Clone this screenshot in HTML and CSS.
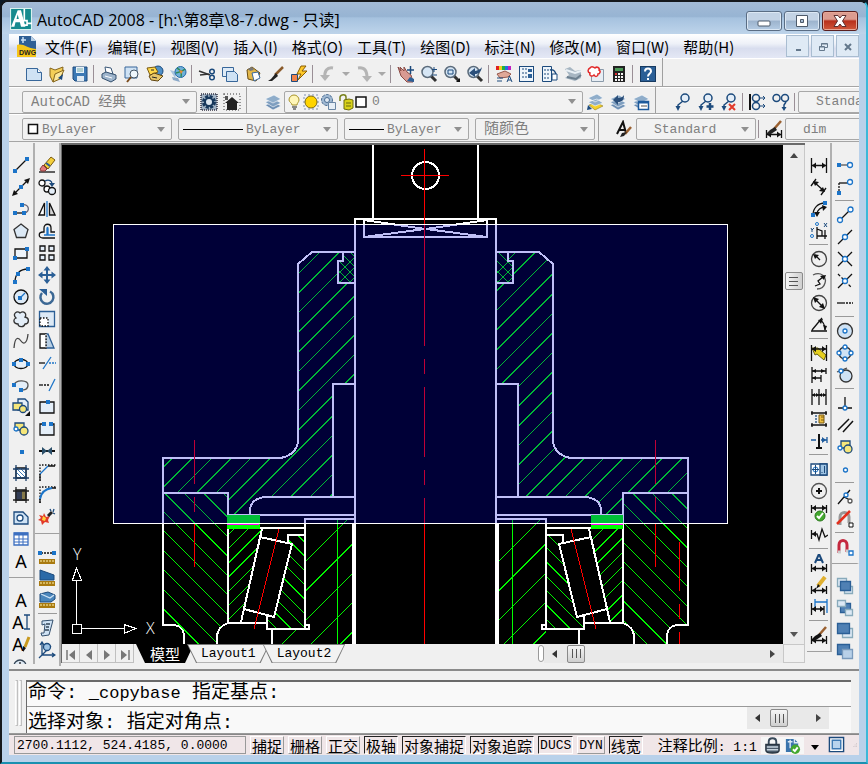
FILE: index.html
```html
<!DOCTYPE html>
<html lang="zh-CN">
<head>
    <meta charset="UTF-8">
    <meta name="viewport" content="width=device-width, initial-scale=1.0">
    <title>AutoCAD 2008</title>
    <link rel="stylesheet" href="styles.css">
</head>
<body>
<!-- shared icon parts -->
<svg class="defs" aria-hidden="true">
    <symbol id="dim" viewBox="0 0 18 18"><path d="M1.500 2V17M16.500 2V17M2 9.500H16" stroke="#111" stroke-width="1.300"/><path d="M2 9.500l4-3v6zM16 9.500l-4-3v6z" fill="#111" stroke="none"/></symbol>
    <symbol id="dimlow" viewBox="0 0 18 18"><path d="M1.500 10V18M16.500 10V18M2 14.500H16" stroke="#111" stroke-width="1.300"/><path d="M2 14.500l4-3v6zM16 14.500l-4-3v6z" fill="#111" stroke="none"/></symbol>
    <symbol id="ruler" viewBox="0 0 18 18"><path d="M1 12h16v5h-16z" fill="#a97a10" stroke="none"/><path d="M3 13v2M6 13v2M9 13v2M12 13v2M15 13v2" stroke="#fff3b0" stroke-width="1"/></symbol>
    <symbol id="layers" viewBox="0 0 18 18"><path d="M1 12l9-3 7 4-8 4z" fill="#6d8fb4" stroke="#fff" stroke-width=".6"/><path d="M1 9l9-3 7 4-8 4z" fill="#7f9fc0" stroke="#fff" stroke-width=".6"/><path d="M1 6l9-4 7 4-8 4z" fill="#8fadca" stroke="#fff" stroke-width=".6"/></symbol>
    <symbol id="lens" viewBox="0 0 18 18"><path d="M11 11l5 5" stroke="#333" stroke-width="3"/><circle cx="7.500" cy="7" r="5.500" fill="#d6e6f5" stroke="#5b6b7b" stroke-width="1.500"/></symbol>
    <symbol id="leader" viewBox="0 0 18 18"><circle cx="11" cy="5" r="4" fill="#e4eef8" stroke="#1c4a7c" stroke-width="1.500"/><path d="M9 8L4 12v4" stroke="#1c4a7c" stroke-width="1.500"/><path d="M4 18l-2.500-5h5z" fill="#1c4a7c"/></symbol>
    <symbol id="printer" viewBox="0 0 18 18"><path d="M5 2l6 1 2 6-7-1z" fill="#fff" stroke="#3b5878"/><path d="M2 9l4-2 10 3v4l-5 3-9-4z" fill="#9db4cc" stroke="#34506e"/><path d="M5 11l7 2" stroke="#fff"/></symbol>
    <symbol id="dots" viewBox="0 0 18 18"><rect x="1.500" y="1.500" width="14" height="15" fill="#eef5fb" stroke="#1c4a7c"/><path d="M5 3v12M8 3v12" stroke="#1c4a7c" stroke-dasharray="2 2"/></symbol>
</svg>

<div class="window">
    <header class="titlebar">
        <svg class="appicon" viewBox="0 0 20 20"><path d="M0 0h20v20h-20z" fill="#168a8e"/><path d="M0 0h20v20h-20z" stroke="#d9f2ef" stroke-width="2"/><path d="M1 17L7 2h3l4 15h-4l-1-4H5l-1 4z" fill="#fff"/><path d="M7 6l-1 4h2z" fill="#168a8e"/><path d="M13 1v11M15 14h5M11.500 11.500h4v4h-4z" stroke="#fff" stroke-width="1.500"/></svg>
        <h1 class="title">AutoCAD 2008 - [h:\第8章\8-7.dwg - 只读]</h1>
        <button class="winbtn" aria-label="最小化"><svg viewBox="0 0 16 14"><rect x="2" y="7" width="12" height="5" rx="1" fill="#fff" stroke="#4d5a6a"/></svg></button>
        <button class="winbtn" aria-label="还原"><svg viewBox="0 0 16 14"><path fill-rule="evenodd" d="M2.500 1.500h11v11h-11zM6.500 5.500h3v3h-3z" fill="#fff" stroke="#4d5a6a"/></svg></button>
        <button class="winbtn close" aria-label="关闭"><svg viewBox="0 0 16 14"><path d="M2 1.500h4l2 2.500 2-2.500h4L10.500 7l3.500 5.500h-4L8 10l-2 2.500H2L5.500 7z" fill="#fff" stroke="#5d3030"/></svg></button>
    </header>

    <nav class="menubar">
        <svg class="docicon" viewBox="0 0 20 22"><path d="M2 1h12l5 5v12H2z" fill="#2f5f96"/><path d="M14 1v5h5" fill="#b8cfe6"/><path d="M4 5h5M6 2v6" stroke="#c9e0f5"/><path d="M0 10c7-2 9 3 19 4v8H0z" fill="#f5c518"/><text x="2" y="20" class="dwg">DWG</text></svg>
        <a href="#">文件(F)</a><a href="#">编辑(E)</a><a href="#">视图(V)</a><a href="#">插入(I)</a><a href="#">格式(O)</a><a href="#">工具(T)</a><a href="#">绘图(D)</a><a href="#">标注(N)</a><a href="#">修改(M)</a><a href="#">窗口(W)</a><a href="#">帮助(H)</a>
        <span class="docbtns">
            <button aria-label="最小化文档"><svg viewBox="0 0 12 12"><path d="M4 9h5" stroke="#64788c" stroke-width="2"/></svg></button>
            <button aria-label="还原文档"><svg viewBox="0 0 12 12"><path d="M4.500 5V2.500h6v4H8M2.500 5.500h5v4h-5zM4 3h6M2 6h5" stroke="#64788c"/></svg></button>
            <button aria-label="关闭文档"><svg viewBox="0 0 12 12"><path d="M3 3l6 6M9 3l-6 6" stroke="#64788c" stroke-width="2"/></svg></button>
        </span>
    </nav>

    <div class="toolrow">
        <div class="bar standard">
            <button aria-label="新建"><svg viewBox="0 0 18 18"><path d="M1.500 3.500h11l4 4v8h-15z" fill="#cfe2f4" stroke="#38679a"/><path d="M12.500 3.500v4h4" fill="#fff" stroke="#38679a"/></svg></button>
            <button aria-label="打开"><svg viewBox="0 0 18 18"><path d="M2 3l5 2 8-3-1 9-9 6-3-6z" fill="#f4cf58" stroke="#86651b"/><path d="M5 17l2-8 9-4-4 9z" fill="#fbe79a" stroke="#86651b"/><path d="M10 13l5-4-1 6z" fill="#1c4a7c"/></svg></button>
            <button aria-label="保存"><svg viewBox="0 0 18 18"><path d="M2 2h14v14H4l-2-2z" fill="#3c79b4" stroke="#1c4a7c"/><path d="M5 2h8v6H5z" fill="#e8f2fa"/><path d="M6 11h7v5H6z" fill="#dfe9f2"/><path d="M6 4h6M6 6h6" stroke="#7aa"/></svg></button>
            <i class="sep"></i>
            <button aria-label="打印"><svg viewBox="0 0 18 18"><use href="#printer"/></svg></button>
            <button aria-label="打印预览"><svg viewBox="0 0 18 18"><path d="M2 2h12v11H2z" fill="#cfe2f4" stroke="#38679a"/><circle cx="11" cy="9" r="4" fill="#eef6fc" stroke="#456"/><path d="M8 12l-4 5" stroke="#7a4a1a" stroke-width="2"/></svg></button>
            <button aria-label="发布"><svg viewBox="0 0 18 18"><circle cx="12" cy="6" r="5" fill="#4f8fc6" stroke="#1c4a7c"/><path d="M1 3l8-1 3 5-8 3z" fill="#ffd84a" stroke="#7a5a10"/><path d="M3 11l5-3 9 3-5 5-7-1z" fill="#e6c56a" stroke="#5e4410"/><path d="M5 5h3M6 12l5 1" stroke="#222"/></svg></button>
            <button aria-label="三维DWF"><svg viewBox="0 0 18 18"><path d="M1 5l7 2-2 6z" fill="#a8c4de"/><circle cx="11.500" cy="7" r="5.500" fill="#6fb0d8" stroke="#2468a8"/><path d="M8 3c4 2 5 6 4 9M7 8c4-1 7-2 9-4" stroke="#2f8a5a" stroke-width="1.500"/><path d="M10 5l4 1-2 3z" fill="#e88c3a"/><path d="M3 12l6 1 2 4-7-2z" fill="#8aa8c8"/></svg></button>
            <i class="sep"></i>
            <button aria-label="剪切"><svg viewBox="0 0 18 18"><path d="M1 6l11 4M2 10l9-1" stroke="#333" stroke-width="1.500"/><circle cx="14" cy="6.500" r="2.300" stroke="#1c4a7c" stroke-width="1.500"/><circle cx="14" cy="12.500" r="2.300" stroke="#1c4a7c" stroke-width="1.500"/></svg></button>
            <button aria-label="复制"><svg viewBox="0 0 18 18"><path d="M1.500 2.500h11v9h-11z" fill="#dfebf6" stroke="#38679a"/><path d="M5.500 6.500h8l3 3v7h-11z" fill="#cfe2f4" stroke="#38679a"/></svg></button>
            <button aria-label="粘贴"><svg viewBox="0 0 18 18"><path d="M3 5l5-3 8 6-4 8-8-2z" fill="#e4b84a" stroke="#6b4d12"/><path d="M8 8l6-1 2 6-6 3z" fill="#fff" stroke="#38679a"/><path d="M4 4l4-2 2 3-4 1z" fill="#777"/></svg></button>
            <button aria-label="特性匹配"><svg viewBox="0 0 18 18"><path d="M16 2L8 10" stroke="#8a5a2a" stroke-width="2.500"/><path d="M9 8l2 3-6 5H1l3-2z" fill="#222"/></svg></button>
            <button aria-label="块编辑器"><svg viewBox="0 0 18 18"><path d="M1.500 9.500h6v7h-6z" fill="#f0824a" stroke="#1c4a7c"/><path d="M11 1l-4 8h4l-3 6 9-9h-5l4-5z" fill="#ffc928" stroke="#8a5c00"/></svg></button>
            <i class="sep"></i>
            <button aria-label="放弃"><svg viewBox="0 0 18 18"><path d="M14 3C8 2 5 6 6 13" stroke="#b4b4b4" stroke-width="3"/><path d="M1 10h10l-5 6z" fill="#b4b4b4"/></svg></button>
            <button class="mini" aria-label="放弃列表"><b class="tri"></b></button>
            <button aria-label="重做"><svg viewBox="0 0 18 18"><path d="M3 3c7-1 9 3 9 10" stroke="#b4b4b4" stroke-width="3"/><path d="M7 11h10l-5 6z" fill="#b4b4b4"/></svg></button>
            <button class="mini" aria-label="重做列表"><b class="tri"></b></button>
            <i class="sep"></i>
            <button aria-label="实时平移"><svg viewBox="0 0 18 18"><path d="M1 2l3 4-1-4 4 4 0-4 3 5 4 3 2 7h-6l-6-6z" fill="#d99a92" stroke="#8a4a44"/><path d="M10 16l3-4 4 2v3z" fill="#2b5f96"/><path d="M13.500 1v8M10 5h7" stroke="#1c4a7c" stroke-width="1.500"/></svg></button>
            <button aria-label="实时缩放"><svg viewBox="0 0 18 18"><use href="#lens"/><path d="M14 2v5M12 4.500h5M12 10h5" stroke="#1c4a7c"/></svg></button>
            <button aria-label="窗口缩放"><svg viewBox="0 0 18 18"><use href="#lens"/><path d="M5 5h5v4H5z" stroke="#1c4a7c"/><path d="M17 13v4h-4z" fill="#111"/></svg></button>
            <button aria-label="缩放上一个"><svg viewBox="0 0 18 18"><use href="#lens"/><path d="M3 8l6-5v3c3-1 5-1 7-4-1 5-3 7-7 7v3z" fill="#2b4f7a"/></svg></button>
            <i class="sep"></i>
            <button aria-label="特性"><svg viewBox="0 0 18 18"><path d="M1 1h3v4H1z" fill="#e02020"/><path d="M4 1h3v4H4z" fill="#f0d020"/><path d="M7 1h3v4H7z" fill="#20b040"/><path d="M10 1h3v4h-3z" fill="#2070e0"/><path d="M13 1h3v4h-3z" fill="#c020c0"/><path d="M2 9l8-3 6 3-3 3-8 1z" fill="#e0a898" stroke="#96584c"/><path d="M2 13h6M2 16h5M12 17l2.500-6 2.500 6M13 15h3" stroke="#1c4a7c"/></svg></button>
            <button aria-label="设计中心"><svg viewBox="0 0 18 18"><use href="#dots"/><path d="M10 4h4v3h-4zM10 9h4v4h-4z" fill="#2b5f96"/></svg></button>
            <button aria-label="工具选项板"><svg viewBox="0 0 18 18"><path d="M1.500 1.500h9v15h-9z" fill="#eef5fb" stroke="#1c4a7c"/><path d="M4 4v11M7 4v11" stroke="#1c4a7c" stroke-dasharray="2 2"/><path d="M9 5c4-1 6 2 6 6" stroke="#1c4a7c" stroke-width="1.500"/><path d="M11 9h5v6h-5z" fill="#fff" stroke="#1c4a7c"/></svg></button>
            <button aria-label="图纸集"><svg viewBox="0 0 18 18"><path d="M1 4l5-2 5 4 6-1v8l-6 3-10-3 4-3z" fill="#a7b6c2"/><path d="M2 5l9 3 6-2" stroke="#e9f0f5" stroke-width="2"/><path d="M3 12l9 2 5-4" stroke="#6c7f8e" stroke-width="2"/></svg></button>
            <button aria-label="标记集"><svg viewBox="0 0 18 18"><path d="M4.500 4.500h12v12h-12z" fill="#e8eef4" stroke="#8a9aaa"/><path d="M3 3c2-3 4 0 5 0 2-2 5 0 4 2 2 1 1 4-1 4 0 3-3 3-4 1-2 2-5 1-4-2-3-1-2-4 0-5z" fill="#fff" stroke="#e22a2a" stroke-width="1.500"/></svg></button>
            <button aria-label="快速计算器"><svg viewBox="0 0 18 18"><path d="M3 1h12v16H3z" fill="#222"/><path d="M5 3h8v3H5z" fill="#4c9a58"/><path d="M5 9h8M5 12h8M5 15h8" stroke="#f4f4f4" stroke-width="2" stroke-dasharray="2 1"/><path d="M5 9h2" stroke="#e03030" stroke-width="2"/></svg></button>
            <i class="sep"></i>
            <button aria-label="帮助"><svg viewBox="0 0 18 18"><rect x="1.500" y="1.500" width="15" height="15" fill="#2b5f96" stroke="#173a60"/><path d="M6 6.500c0-4 6-4 6 0 0 2-3 2-3 5M9 13v2" stroke="#fff" stroke-width="2"/></svg></button>
        </div>
    </div>

    <div class="toolrow">
        <div class="bar">
            <span class="combo w-space"><select class="indent" aria-label="工作空间"><option>AutoCAD 经典</option></select></span>
            <button aria-label="工作空间设置"><svg viewBox="0 0 18 18"><path d="M1 1h16v16H1z" fill="#a3b4c6" stroke="#334" stroke-width="1.500" stroke-dasharray="1 1"/><circle cx="9" cy="9" r="5.500" stroke="#17385c" stroke-width="3" stroke-dasharray="3 1.300"/><circle cx="9" cy="9" r="4" fill="#dfe8f1" stroke="#17385c" stroke-width="2"/></svg></button>
            <button aria-label="我的工作空间"><svg viewBox="0 0 18 18"><path d="M1 1h16v16H1z" stroke="#777" stroke-dasharray="1 2"/><path d="M9 4l7 6h-2v7H4v-7H2z" fill="#222"/><path d="M2 3h3v4H2z" fill="#555"/></svg></button>
        </div>
        <div class="bar layerbar">
            <button aria-label="图层特性管理器"><svg viewBox="0 0 18 18"><use href="#layers"/></svg></button>
            <span class="combo w-layer">
                <svg class="layericons" viewBox="0 0 84 18">
                    <path d="M4 7a5 5 0 1 1 10 0c0 2-2 3-2 5H7c0-2-3-3-3-5z" fill="#fff6b8" stroke="#a89428"/><path d="M7 14h5M8 16h3" stroke="#666" stroke-width="1.500"/>
                    <path d="M19 2h14v14H19z" stroke="#7f90b0" stroke-dasharray="2 2"/><circle cx="26" cy="9" r="6" fill="#ffd400" stroke="#7d6a10"/>
                    <circle cx="42" cy="7" r="5.500" fill="#9fb8d2" stroke="#4a6c92" stroke-dasharray="3 1"/><circle cx="42" cy="7" r="2.500" fill="#dfe9f3" stroke="#4a6c92"/><path d="M43.500 9.500h7v7h-7z" fill="#e6eef6" stroke="#6a86a4"/>
                    <path d="M55 8V4c1-3 6-3 6 0v3" stroke="#77801a" stroke-width="1.500"/><path d="M59 7l5-1 4 1v8l-4 2-5-1z" fill="#d8d21a" stroke="#6d6a10"/><path d="M61 10h5M61 13h5" stroke="#6d6a10"/>
                    <path d="M71 4h10v10H71z" fill="#fff" stroke="#111" stroke-width="1.500"/>
                </svg>
                <select aria-label="图层"><option>0</option></select></span>
            <button aria-label="置为当前"><svg viewBox="0 0 18 18"><path d="M3 12l8-2 6 3-8 4z" fill="#f4d02a" stroke="#7a6a10" stroke-width=".5"/><path d="M2 9l9-3 6 4-8 3zM2 5l9-4 6 4-8 4z" fill="#8fadca" stroke="#fff" stroke-width=".6"/><path d="M1 17l1-5 4 4z" fill="#1c4a7c"/></svg></button>
            <button aria-label="上一个图层"><svg viewBox="0 0 18 18"><use href="#layers"/><path d="M4 7l5-5v3c3 0 5-1 6-3 0 5-2 7-6 7v3z" fill="#2b4f7a"/></svg></button>
            <button aria-label="图层状态"><svg viewBox="0 0 18 18"><use href="#layers"/><path d="M6.500 8.500h10v8h-10z" fill="#fff" stroke="#1c5a9c"/><path d="M7 9.500h9" stroke="#1c5a9c" stroke-width="2"/><path d="M9 13h6" stroke="#888"/></svg></button>
        </div>
        <div class="bar open leaders">
            <button aria-label="多重引线"><svg viewBox="0 0 18 18"><use href="#leader"/></svg></button>
            <button aria-label="添加引线"><svg viewBox="0 0 18 18"><use href="#leader"/><path d="M13 10v7M9.500 13.500h7" stroke="#1c4a7c" stroke-width="2.500"/></svg></button>
            <button aria-label="删除引线"><svg viewBox="0 0 18 18"><use href="#leader"/><path d="M9 11l6 6M15 11l-6 6" stroke="#e23a2a" stroke-width="2"/></svg></button>
            <i class="sep"></i>
            <button aria-label="多重引线对齐"><svg viewBox="0 0 18 18"><path d="M1 1v16" stroke="#111" stroke-width="2"/><circle cx="7" cy="5" r="3.500" stroke="#1c4a7c" stroke-width="1.500"/><circle cx="7" cy="13" r="3.500" stroke="#1c4a7c" stroke-width="1.500"/><path d="M10 5h6M10 13h6M14 3l2 2-2 2M14 11l2 2-2 2" stroke="#1c4a7c" stroke-width="1"/></svg></button>
            <button aria-label="多重引线合并"><svg viewBox="0 0 18 18"><circle cx="4.500" cy="5" r="3.500" stroke="#1c4a7c" stroke-width="1.500"/><circle cx="13" cy="5" r="3.500" stroke="#1c4a7c" stroke-width="1.500"/><path d="M14 9l-2 3v4" stroke="#1c4a7c" stroke-width="1.500"/><path d="M9.500 14h5l-2.500 4z" fill="#1c4a7c"/></svg></button>
            <i class="sep"></i>
            <span class="combo w-rest"><select class="indent" aria-label="引线样式"><option>Standard</option></select></span>
        </div>
    </div>

    <div class="toolrow last">
        <div class="bar props">
            <span class="combo w-color"><svg class="swatch" viewBox="0 0 12 12"><path d="M1.500 1.500h9v9h-9z" fill="#fff" stroke="#111"/></svg><select aria-label="颜色"><option>ByLayer</option></select></span>
            <span class="combo w-line"><hr class="line"><select aria-label="线型"><option>ByLayer</option></select></span>
            <span class="combo w-weight"><hr class="line short"><select aria-label="线宽"><option>ByLayer</option></select></span>
            <span class="combo w-plot"><select class="indent" aria-label="打印样式"><option>随颜色</option></select></span>
        </div>
        <div class="bar open styles">
            <button aria-label="文字样式"><svg viewBox="0 0 18 18"><path d="M2 14L8 2l3 11M4 10h6" stroke="#111" stroke-width="2"/><path d="M16 7l-6 7" stroke="#9a6030" stroke-width="2.500"/><path d="M12 12l-3 4-4 1 2-4z" fill="#222"/></svg></button>
            <span class="combo w-text"><select class="indent" aria-label="文字样式名称"><option>Standard</option></select></span>
            <i class="sep"></i>
            <button aria-label="标注样式"><svg viewBox="0 0 18 18"><use href="#dimlow"/><path d="M16 1L9 9" stroke="#9a6030" stroke-width="2.500"/><path d="M10 7l2 3-6 4H1l4-4z" fill="#222"/></svg></button>
            <span class="combo w-rest"><select class="indent" aria-label="标注样式名称"><option>dim</option></select></span>
        </div>
    </div>

    <main class="workspace">
        <div class="stack draw">
            <div class="vbar">
                <button aria-label="直线"><svg viewBox="0 0 18 18"><path d="M3 15L15 3"/><path class="pt" d="M1 13h4v4H1zM13 1h4v4h-4z"/></svg></button>
                <button aria-label="构造线"><svg viewBox="0 0 18 18"><path d="M2 16L16 2"/><path class="ah" d="M0 18l2-6 4 4zM18 0l-6 2 4 4z"/><path class="pt" d="M7 7h4v4H7z"/></svg></button>
                <button aria-label="多段线"><svg viewBox="0 0 18 18"><path d="M3 13h8"/><path d="M10 5c7-2 9 7 2 8" stroke="#667"/><path class="pt" d="M1 11h4v4H1zM10 11h4v4h-4zM8 3h4v4H8z"/></svg></button>
                <button aria-label="正多边形"><svg viewBox="0 0 18 18"><path d="M9 2l7 5.500-2.500 8h-9L2 7.500z" fill="#dce9f5" stroke="#333"/></svg></button>
                <button aria-label="矩形"><svg viewBox="0 0 18 18"><path d="M3 5h12v9H3z" fill="#eef4fa"/><path class="pt" d="M1 12h4v4H1zM13 3h4v4h-4z"/></svg></button>
                <button aria-label="圆弧"><svg viewBox="0 0 18 18"><path d="M3 16C3 8 8 3 16 3"/><path class="pt" d="M1 14h4v4H1zM4 6h4v4H4zM14 1h4v4h-4z"/></svg></button>
                <button aria-label="圆"><svg viewBox="0 0 18 18"><circle cx="9" cy="9" r="7" fill="#dce9f5"/><path d="M8 10l5-5" stroke="#1c74c8"/><path class="pt" d="M6 8h4v4H6z"/></svg></button>
                <button aria-label="修订云线"><svg viewBox="0 0 18 18"><path d="M4 8C0 4 5 0 8 3c4-3 7 1 5 4 5 1 4 7 0 7-1 4-7 3-7 0-5 0-5-5-2-6z" fill="#e4eef8" stroke="#333"/></svg></button>
                <button aria-label="样条曲线"><svg viewBox="0 0 18 18"><path d="M2 16C3 3 7 6 9 9s6 4 7-7" stroke="#444"/></svg></button>
                <button aria-label="椭圆"><svg viewBox="0 0 18 18"><ellipse cx="9" cy="10" rx="7" ry="4.500" fill="#e4eef8"/><path class="pt" d="M0 8h4v4H0zM14 8h4v4h-4zM7 4h4v4H7z"/></svg></button>
                <button aria-label="椭圆弧"><svg viewBox="0 0 18 18"><path d="M2 9c2-6 14-5 14 0s-4 5-7 5" fill="#e4eef8" stroke="#555"/><path class="pt" d="M0 7h4v4H0zM7 12h4v4H7z"/></svg></button>
                <button aria-label="插入块"><svg viewBox="0 0 18 18"><path d="M6 1h7l3 3v8H6z" fill="#e4eef8" stroke="#1c4a7c"/><path d="M1 5h9v7H1z" fill="#f5e67a" stroke="#1c4a7c"/><circle cx="11" cy="11" r="3.500" fill="#f5e67a" stroke="#1c4a7c"/><path class="ah" d="M18 13v5h-5z"/></svg></button>
                <button aria-label="创建块"><svg viewBox="0 0 18 18"><path d="M3 3h9v7H3z" fill="#f5e67a" stroke="#1c4a7c"/><circle cx="12" cy="11" r="4" fill="#f5e67a" stroke="#1c4a7c"/><circle cx="4" cy="9" r="2" fill="#fff" stroke="#1c74c8"/></svg></button>
                <button aria-label="点"><svg viewBox="0 0 18 18"><path class="pt" d="M8 8h4v4H8z"/></svg></button>
                <button aria-label="图案填充"><svg viewBox="0 0 18 18"><path d="M4 4h10v10H4z" fill="#fff"/><path d="M4 8l6 6M4 4l10 10M8 4l6 6" stroke="#3c79b4" stroke-width="1"/><path d="M1 5h16M1 14h16M4 1v16M14 1v16" stroke="#1c3f68"/></svg></button>
                <button aria-label="渐变色"><svg viewBox="0 0 18 18"><path d="M4 4h10v10H4z" fill="#85794a"/><path d="M4 4h6v10H4z" fill="#333d55" stroke="none"/><path d="M1 5h16M1 14h16M4 1v16M14 1v16" stroke="#222"/></svg></button>
                <button aria-label="面域"><svg viewBox="0 0 18 18"><path d="M2 4h9l5 5v7H2z" fill="#cfe2f4" stroke="#1c4a7c"/><circle cx="8" cy="10" r="3" fill="#fff" stroke="#1c4a7c"/></svg></button>
                <button aria-label="表格"><svg viewBox="0 0 18 18"><path d="M2 3h14v12H2z" fill="#fff" stroke="#3c6fc0"/><path d="M2 4h14" stroke="#3c6fc0" stroke-width="3"/><path d="M2 9h14M2 12h14M7 5v10M11 5v10" stroke="#3c6fc0" stroke-width="1"/></svg></button>
                <button class="glyph">A</button>
            </div>
            <div class="vbar clip">
                <button class="glyph" aria-label="多行文字">A</button>
                <button class="glyph" aria-label="单行文字">A<svg class="caret" viewBox="0 0 6 18"><path d="M0 2h6M0 16h6M3 2v14" stroke="#1c4a7c"/></svg></button>
                <button class="glyph" aria-label="编辑文字">A<svg class="caret" viewBox="0 0 6 18"><path d="M5 2L1 12" stroke="#c89a20" stroke-width="3"/><path class="ah" d="M-1 11l0 6 3-4z"/></svg></button>
                <button aria-label="查找"><svg viewBox="0 0 18 18"><circle cx="8" cy="9" r="6" stroke="#345" fill="#dfe9f3"/><path d="M8 5v4l4 1M3 9l5 2" stroke="#222"/></svg></button>
            </div>
        </div>

        <div class="stack modify">
            <div class="vbar">
                <button aria-label="删除"><svg viewBox="0 0 18 18"><path d="M1 16h16"/><path d="M6 9L13 1l4 3-7 9z" fill="#f4cf3a" stroke="#7a5a10" stroke-width="1"/><path d="M8 7l4 3" stroke="#2b5f96" stroke-width="2"/><path d="M5 9l4 4-2 2H3l-1-2z" fill="#e47a7a" stroke="#8a3a3a" stroke-width="1"/></svg></button>
                <button aria-label="复制对象"><svg viewBox="0 0 18 18"><circle cx="4" cy="5" r="3" fill="#fff"/><circle cx="9" cy="11" r="3" fill="#fff"/><circle cx="14" cy="13" r="3.500" fill="#e4eef8"/><path d="M7 3c4-2 7 0 7 3" stroke="#1c4a7c"/><path d="M11 5h6l-3 4z" fill="#1c4a7c" stroke="none"/></svg></button>
                <button aria-label="镜像"><svg viewBox="0 0 18 18"><path d="M6.500 3v12H1z" fill="#fff"/><path d="M11.500 3v12H17z" fill="#d4d4d4"/><path d="M9 1v16" stroke="#1c74c8"/></svg></button>
                <button aria-label="偏移"><svg viewBox="0 0 18 18"><path d="M17 16H5c-5 0-5-6 0-6h1V6c0-5 7-5 7 0v4h4"/><path d="M17 13H6M9 13V7c0-2 1-2 1 0v6" stroke="#1c74c8"/></svg></button>
                <button aria-label="阵列"><svg viewBox="0 0 18 18"><path d="M2 2h5v5H2zM11 2h5v5h-5zM2 11h5v5H2zM11 11h5v5h-5z" fill="#e4eef8"/></svg></button>
                <button aria-label="移动"><svg viewBox="0 0 18 18"><path d="M9 3v12M3 9h12" stroke="#2b5f96" stroke-width="2"/><path d="M9 0l3.500 4.500h-7zM9 18l3.500-4.500h-7zM0 9l4.500-3.500v7zM18 9l-4.500-3.500v7z" fill="#2b5f96" stroke="none"/></svg></button>
                <button aria-label="旋转"><svg viewBox="0 0 18 18"><path d="M12 3.500A6.500 6.500 0 1 1 4 5" stroke="#3c6894" stroke-width="2.500"/><path d="M1 1h8v7z" fill="#2b5f96" stroke="none"/></svg></button>
                <button aria-label="缩放"><svg viewBox="0 0 18 18"><path d="M1.500 1.500h15v15h-15z" fill="#dce9f5" stroke="#2b5f96"/><path d="M2 8h8v8H2z" stroke-dasharray="1.500 1.500" fill="#fff"/></svg></button>
                <button aria-label="拉伸"><svg viewBox="0 0 18 18"><path d="M8 2h2l6 14H8z" fill="#b8cfe4" stroke="#2b5f96"/><path d="M2 2h6v14H2z" fill="#fff"/><path d="M8 2v14" stroke="#fff" stroke-dasharray="1.500 1.500"/></svg></button>
                <button aria-label="修剪"><svg viewBox="0 0 18 18"><path d="M1 9h6"/><path d="M5 15L13 3" stroke="#1c74c8"/><path d="M11 9h7" stroke="#1c74c8" stroke-dasharray="2 1"/></svg></button>
                <button aria-label="延伸"><svg viewBox="0 0 18 18"><path d="M1 9h4"/><path d="M6 9h6" stroke-dasharray="2 1"/><path d="M11 15l6-12" stroke="#1c74c8"/></svg></button>
                <button aria-label="打断于点"><svg viewBox="0 0 18 18"><path d="M2 4h14v11H2z" fill="#e4eef8"/><path class="pt" d="M8 2h4v4H8z"/></svg></button>
                <button aria-label="打断"><svg viewBox="0 0 18 18"><path d="M5 4H2v11h14V4h-3" fill="#e4eef8"/><path class="pt" d="M4 2h4v4H4zM11 2h4v4h-4z"/></svg></button>
                <button aria-label="合并"><svg viewBox="0 0 18 18"><path d="M1 9h16" stroke-width="2"/><path d="M4 5l5 4-5 4zM14 5L9 9l5 4z" fill="#2b4f6a" stroke="none"/></svg></button>
                <button aria-label="倒角"><svg viewBox="0 0 18 18"><path d="M2 17V1h16" stroke-dasharray="1.500 1.500"/><path d="M2 17V10M10 2h7"/><path d="M2 10l8-8" stroke="#1c74c8"/></svg></button>
                <button aria-label="圆角"><svg viewBox="0 0 18 18"><path d="M2 17V1h16" stroke-dasharray="1.500 1.500"/><path d="M2 17v-4M14 2h4"/><path d="M2 13C3 6 7 3 14 2" stroke="#1c74c8" stroke-width="2"/></svg></button>
                <button aria-label="分解"><svg viewBox="0 0 18 18"><path d="M1 7l4 1 1-3 2 4 4-1-2 4 1 3-4-1-3 3-1-4-3-1 3-2z" fill="#e23a2a" stroke="none"/><path d="M5 8l3 2-1 3-3-1z" fill="#ffd23a" stroke="none"/><path d="M10 8l4-4" stroke="#222" stroke-width="3"/><path d="M12 1l1 2M16 1l-1 3M17 6l-2-1" stroke="#1c4a7c"/></svg></button>
            </div>
            <div class="vbar">
                <button aria-label="距离"><svg viewBox="0 0 18 18"><use href="#ruler"/><path d="M3 6h12" stroke-dasharray="2 1"/><path class="pt" d="M0 4h4v4H0zM14 4h4v4h-4z"/></svg></button>
                <button aria-label="面积"><svg viewBox="0 0 18 18"><use href="#ruler"/><path d="M2 1l14 5v5H2z" fill="#2b6aa8" stroke="#1c4a7c" stroke-width="1"/></svg></button>
                <button aria-label="质量特性"><svg viewBox="0 0 18 18"><use href="#ruler"/><path d="M2 3l8-2 7 3v4l-4 3H2z" fill="#4a86bc" stroke="#1c4a7c" stroke-width="1"/><path d="M3 3l9 4 4-3" stroke="#cfe2f4"/></svg></button>
                <i class="hsep"></i>
                <button aria-label="列表"><svg viewBox="0 0 18 18"><path d="M4 2l11-1-1 4-3 11-7 1-1-3h3L7 5 4 6z" fill="#cfe2f4" stroke="#34506e" stroke-width="1"/><path d="M8 5h4M8 8h3M7 11h4" stroke="#345"/></svg></button>
                <button aria-label="定位点"><svg viewBox="0 0 18 18"><path d="M4 2v12h12M2 4l2-3 2 3M14 12l3 2-3 2M4 14l-3 3M4 14l9-9" stroke="#1c4a7c"/><circle cx="9" cy="6" r="3.500" fill="#9fc4e4" stroke="#1c4a7c"/></svg></button>
            </div>
        </div>

        <section class="view">
            <svg class="canvas" viewBox="62 145 721 499" preserveAspectRatio="xMidYMid slice">
                <defs>
                    <path id="slash" d="M140 245l-420 420m439.600-420l-420 420m439.600-420l-420 420m439.600-420l-420 420m439.600-420l-420 420m439.600-420l-420 420m439.600-420l-420 420m439.600-420l-420 420m439.600-420l-420 420m439.600-420l-420 420m439.600-420l-420 420m439.600-420l-420 420m439.600-420l-420 420m439.600-420l-420 420m439.600-420l-420 420m439.600-420l-420 420m439.600-420l-420 420m439.600-420l-420 420m439.600-420l-420 420m439.600-420l-420 420m439.600-420l-420 420m439.600-420l-420 420m439.600-420l-420 420m439.600-420l-420 420m439.600-420l-420 420m439.600-420l-420 420m439.600-420l-420 420m439.600-420l-420 420m439.600-420l-420 420m439.600-420l-420 420m439.600-420l-420 420m439.600-420l-420 420m439.600-420l-420 420m439.600-420l-420 420m439.600-420l-420 420m439.600-420l-420 420m439.600-420l-420 420m439.600-420l-420 420m439.600-420l-420 420m439.600-420l-420 420m439.600-420l-420 420m439.600-420l-420 420m439.600-420l-420 420m439.600-420l-420 420m439.600-420l-420 420m439.600-420l-420 420"/>
                    <path id="back" d="M5.700 490l160 160m-140.500-160l160 160m-140.500-160l160 160m-140.500-160l160 160m-140.500-160l160 160m-140.500-160l160 160m-140.500-160l160 160m-140.500-160l160 160m-140.500-160l160 160m-140.500-160l160 160m-140.500-160l160 160m-140.500-160l160 160m-140.500-160l160 160m-140.500-160l160 160m-140.500-160l160 160m-140.500-160l160 160m-140.500-160l160 160m-140.500-160l160 160m-140.500-160l160 160m-140.500-160l160 160m-140.500-160l160 160m-140.500-160l160 160m-140.500-160l160 160m-140.500-160l160 160m-140.500-160l160 160m-140.500-160l160 160m-140.500-160l160 160m-140.500-160l160 160m-140.500-160l160 160m-140.500-160l160 160m-140.500-160l160 160m-140.500-160l160 160m-140.500-160l160 160m-140.500-160l160 160m-140.500-160l160 160"/>
                    <path id="fineSlash" d="M236 527l-90 90m104.200-90l-100 100m114.200-100l-100 100m114.200-100l-100 100m114.200-100l-100 100m114.200-100l-100 100m114.200-100l-100 100m114.200-100l-100 100m114.200-100l-100 100m114.200-100l-100 100"/>
                    <path id="fineBack" d="M304.700 527.700l-90-90m90 104.300l-90-90m90 104.300l-90-90m90 104.300l-90-90m90 104.300l-90-90m90 104.300l-90-90m90 104.300l-90-90m90 104.300l-90-90m90 104.300l-90-90m90 104.300l-90-90m90 104.300l-90-90m90 104.300l-90-90m90 104.300l-90-90"/>
                    <path id="wide" d="M353 514l-120 120m120-90.600l-120 120m120-90.600l-120 120m120-90.600l-120 120m120-90.600l-120 120m120-90.600l-120 120"/>
                    <path id="mesh" d="M330 262l40 40m-40-50l40 40m-40-50l40 40m-40-50l40 40m-40 0l40 40M330 282l40-40m-40 50l40-40m-40 50l40-40m-40 50l40-40"/>
                    <path id="coverShape" d="M355 252H312L298 264V440C298 451 288 458 278 458H163V493H228V515H250V510Q250 497 265 497H333V384H355V283H338V261H343V252z"/>
                    <clipPath id="cCover"><use href="#coverShape"/><use href="#coverShape" transform="translate(851)scale(-1 1)"/></clipPath>
                    <path id="housingShape" d="M163 493H228V623Q217 626 217 636V644H184V636Q182 626 172 625H163z"/>
                    <clipPath id="cHousing"><use href="#housingShape"/><use href="#housingShape" transform="translate(851)scale(-1 1)"/></clipPath>
                    <clipPath id="cOuter"><path d="M228 528H262L241 622H228z"/></clipPath>
                    <clipPath id="cOuterR"><path d="M623 528H589L610 622H623z"/></clipPath>
                    <clipPath id="cInner"><path d="M288 535H305V629H267V615L274 617 292 544 288 543z"/></clipPath>
                    <clipPath id="cInnerR"><path d="M563 535H546V629H584V615L577 617 559 544 563 543z"/></clipPath>
                    <path id="sleeveShape" d="M305 519H353V644H272V629H305z"/>
                    <clipPath id="cSleeve"><use href="#sleeveShape"/></clipPath>
                    <clipPath id="cSleeveR"><use href="#sleeveShape" transform="translate(851)scale(-1 1)"/></clipPath>
                    <clipPath id="cSeal"><path d="M343 252H355V283H338V261H343z"/></clipPath>
                    <clipPath id="cSealR"><path d="M508 252H496V283H513V261H508z"/></clipPath>
                    <!-- left half of the section outline, mirrored about the shaft axis -->
                    <g id="half">
                        <path d="M373 145V219M426 219H355V644M364 220V237H426M364 220L425 229 364 237"/>
                        <path d="M355 252H312L298 264V440C298 451 288 458 278 458H163V625H172C180 625 184 630 184 637V644"/>
                        <path d="M343 252V261H338V283H355M355 384H333V497M355 497H265Q250 499 250 511V515"/>
                        <path d="M163 493H228V623M228 515H355M305 629V519H355"/>
                        <path d="M260 528H305M288 543V535H305M262 529L241 622M260 537L292 544 274 617 244 609zM228 622.500H267M228 623C222 625 217 630 217 637V644"/>
                        <path d="M267 615V629H309V625H305M272 629V644"/>
                        <path d="M353.500 524V644" stroke-width="3"/>
                    </g>
                    <g id="halfMarks">
                        <path d="M337.500 520V644" stroke="#0f0"/>
                        <path d="M227 515h32.500v14h-32.500z" fill="#0f0"/>
                        <path d="M227 524.500h32" stroke="#f0f"/>
                        <path d="M194.500 440V484M194.500 497V512M194.500 524V567M279 529L254 629" stroke="#f00"/>
                    </g>
                </defs>
                <rect x="-500" y="-500" width="2000" height="2000" fill="#000"/>
                <g class="hatch">
                    <g clip-path="url(#cCover)"><use href="#slash" transform="translate(10.500)"/></g>
                    <g clip-path="url(#cHousing)"><use href="#back"/></g>
                    <g clip-path="url(#cOuter)"><use href="#fineSlash"/></g>
                    <g clip-path="url(#cOuterR)"><use href="#fineSlash" transform="translate(355)"/></g>
                    <g clip-path="url(#cInner)"><use href="#fineBack"/></g>
                    <g clip-path="url(#cInnerR)"><use href="#fineBack" transform="translate(279)"/></g>
                    <g clip-path="url(#cSleeve)"><use href="#wide"/></g>
                    <g clip-path="url(#cSleeveR)"><use href="#wide" transform="translate(193)"/></g>
                    <g clip-path="url(#cSeal)"><use href="#mesh"/></g>
                    <g clip-path="url(#cSealR)"><use href="#mesh" transform="translate(158)"/></g>
                </g>
                <g class="outline">
                    <use href="#half"/>
                    <use href="#half" transform="translate(851)scale(-1 1)"/>
                    <circle cx="425.500" cy="175.500" r="13.500"/>
                </g>
                <g class="marks">
                    <use href="#halfMarks"/>
                    <use href="#halfMarks" transform="translate(850)scale(-1 1)"/>
                    <path d="M424.500 149V346M424.500 359V374M424.500 387V457M424.500 470V485M424.500 498V644M401 175.500H449M679.500 542V591M679.500 604V619M679.500 632V644" stroke="#f00"/>
                </g>
                <rect x="113.500" y="224.500" width="614" height="299" fill="#0000dc" fill-opacity=".25"/>
                <rect class="frame" x="113.500" y="224.500" width="614" height="299"/>
                <g class="ucs">
                    <path d="M72.500 624.500h9v9h-9zM76.500 624V580M76.500 568l-4 12h9zM82 628.500H124M136 628.500l-12-4v9z"/>
                    <text x="73" y="560">Y</text>
                    <text x="146" y="634">X</text>
                </g>
            </svg>
            <div class="vscroll">
                <b class="tri up"></b>
                <button class="thumb" aria-label="垂直滚动"></button>
                <b class="tri down"></b>
            </div>
            <div class="tabs">
                <button class="nav" aria-label="第一个"><svg viewBox="0 0 12 12"><path d="M2 1v10" stroke="#777"/><path d="M10 1v10L4 6z" fill="#777"/></svg></button>
                <button class="nav" aria-label="上一个"><svg viewBox="0 0 12 12"><path d="M9 1v10L3 6z" fill="#777"/></svg></button>
                <button class="nav" aria-label="下一个"><svg viewBox="0 0 12 12"><path d="M3 1v10l6-5z" fill="#777"/></svg></button>
                <button class="nav" aria-label="最后一个"><svg viewBox="0 0 12 12"><path d="M10 1v10" stroke="#777"/><path d="M2 1v10l6-5z" fill="#777"/></svg></button>
                <button class="tab active"><span>模型</span></button>
                <button class="tab"><span>Layout1</span></button>
                <button class="tab"><span>Layout2</span></button>
                <div class="hscroll">
                    <i class="grip"></i>
                    <div class="track">
                        <b class="tri left"></b>
                        <button class="thumb side" aria-label="水平滚动"></button>
                        <b class="tri right"></b>
                    </div>
                </div>
            </div>
            <div class="corner"></div>
        </section>

        <div class="stack dims">
            <div class="vbar">
                <button aria-label="线性标注"><svg viewBox="0 0 18 18"><use href="#dim"/></svg></button>
                <button aria-label="对齐标注"><svg viewBox="0 0 18 18"><path d="M1 8l5-7M11 17l5-7M4 4l10 9"/><path class="ah" d="M3 3l6 1-4 4zM15 14l-6-1 4-4z"/></svg></button>
                <button aria-label="弧长标注"><svg viewBox="0 0 18 18"><path d="M3 15C3 8 8 3 15 3"/><path d="M7 14c0-4 4-7 8-7"/><path class="ah" d="M4 12l3 5 3-5zM12 5l5 2-4 4z"/><path class="pt" d="M1 13h4v4H1zM13 1h4v4h-4z"/></svg></button>
                <button aria-label="坐标标注"><svg viewBox="0 0 18 18"><path d="M7 5v12M7 14h10M12 14V9L7 7M15 8v9"/><path d="M1 6l1 2 2-2M2 8v2M14 1l3 4M17 1l-3 4" stroke="#1c4a7c" stroke-width="1"/><circle cx="7" cy="2" r="1.500" stroke="#1c74c8" stroke-width="1"/><circle cx="2" cy="14" r="1.500" stroke="#1c74c8" stroke-width="1"/></svg></button>
                <i class="hsep"></i>
                <button aria-label="半径标注"><svg viewBox="0 0 18 18"><circle cx="9" cy="9" r="7.500" stroke="#444"/><path d="M10 10L5 5"/><path class="ah" d="M3 4l6 1-4 4z"/></svg></button>
                <button aria-label="折弯标注"><svg viewBox="0 0 18 18"><path d="M3 3c8-4 14 2 12 8-1 4-4 6-8 6" stroke="#555"/><path d="M5 14l5-2-2-3 5-4"/><path class="ah" d="M16 3l-6 1 4 4z"/></svg></button>
                <button aria-label="直径标注"><svg viewBox="0 0 18 18"><circle cx="9" cy="9" r="7.500" stroke="#444"/><path d="M5 5l8 8"/><path class="ah" d="M3 3l6 2-4 4zM15 15l-6-2 4-4z"/></svg></button>
                <button aria-label="角度标注"><svg viewBox="0 0 18 18"><path d="M1 15h16M2 14L12 2M10 4c4 2 5 6 5 10"/><path class="ah" d="M8 4l5-1-2 5zM13 9l2 6 2-5z"/></svg></button>
                <i class="hsep"></i>
                <button aria-label="快速标注"><svg viewBox="0 0 18 18"><path d="M2 4h6l8 7-2 5-7-6-2 1z" fill="#e6cf1e" stroke="#6d6410" stroke-width="1"/><path d="M1.500 1v16M16.500 1v16M2 5h14"/><path class="ah" d="M2 5l4-3v6zM16 5l-4-3v6z"/></svg></button>
                <button aria-label="基线标注"><svg viewBox="0 0 18 18"><path d="M2 1v16M2 5h14M16 2v6M2 12h9M11 9v7"/><path class="ah" d="M2 5l4-2v4zM15 5l-4-2v4zM2 12l4-2v4z"/></svg></button>
                <button aria-label="连续标注"><svg viewBox="0 0 18 18"><path d="M2 1v16M9 1v16M16 1v16M2 7h14"/><path class="ah" d="M2 7l3-2v4zM9 7l3-2v4zM9 7L6 5v4zM16 7l-3-2v4z"/></svg></button>
                <button aria-label="标注间距"><svg viewBox="0 0 18 18"><path d="M1 3h16M1 15h16M2 1v4M16 1v4M2 13v4M16 13v4"/><path d="M9 5h5v8H9z" fill="#f0c040" stroke="#7a5a10" stroke-width="1"/><path d="M6 5v8" stroke="#1c4a7c" stroke-dasharray="2 1"/><path d="M11 7h3M11 10h3" stroke="#7a5a10" stroke-width="1"/></svg></button>
                <button aria-label="标注打断"><svg viewBox="0 0 18 18"><path d="M9 2v14M6 16h6" stroke-width="2"/><path d="M1 8h5M11 8h6M17 5v6" stroke="#1c5a9c"/><path d="M16 8l-4-3v6z" fill="#1c5a9c" stroke="none"/></svg></button>
                <i class="hsep"></i>
                <button aria-label="公差"><svg viewBox="0 0 18 18"><path d="M1 4h16v11H1z" fill="#fff" stroke="#1c4a7c"/><path d="M10 4h7v11h-7z" fill="#9fc4e4" stroke="#1c4a7c"/><circle cx="5.500" cy="9.500" r="2.500" stroke="#1c74c8" stroke-width="1"/><path d="M5.500 5v9M2 9.500h7M12 12v1M14.500 6v7" stroke="#1c4a7c" stroke-width="1"/></svg></button>
                <button aria-label="圆心标记"><svg viewBox="0 0 18 18"><circle cx="9" cy="9" r="7.500" stroke="#555"/><path d="M9 6v6M6 9h6" stroke-width="2"/></svg></button>
                <button aria-label="检验"><svg viewBox="0 0 18 18"><path d="M1.500 1v8M16.500 1v8M2 4h14"/><path class="ah" d="M2 4l4-3v6zM16 4l-4-3v6z"/><circle cx="10" cy="12" r="5" fill="#43a82e" stroke="#2b7a1c" stroke-width="1"/><path d="M7 12l2 2 4-5" stroke="#fff" stroke-width="2"/></svg></button>
                <button aria-label="折弯线性"><svg viewBox="0 0 18 18"><path d="M1.500 4v9M2 8h5l2 6 3-11 3 8 3-2"/><path class="ah" d="M2 8l4-3v6z"/></svg></button>
                <i class="hsep"></i>
                <button aria-label="编辑标注"><svg viewBox="0 0 18 18"><use href="#dimlow"/><path d="M5 9l3.500-8h1L13 9M6 6h6" stroke="#1c4a7c" stroke-width="2"/></svg></button>
                <button aria-label="编辑标注文字"><svg viewBox="0 0 18 18"><use href="#dimlow"/><path d="M15 1L8 10" stroke="#e0b030" stroke-width="4"/><path class="ah" d="M8 8l-2 5 4-3z"/></svg></button>
                <button aria-label="标注更新"><svg viewBox="0 0 18 18"><path d="M5 1v12M17 1v14M5 4h12" stroke="#1c74c8"/><path d="M1.500 5v12M14 8v9M2 11h12"/><path class="ah" d="M2 11l4-3v6zM14 11l-4-3v6z"/></svg></button>
                <i class="hsep"></i>
                <button aria-label="标注样式管理"><svg viewBox="0 0 18 18"><use href="#dimlow"/><path d="M16 1L9 9" stroke="#9a6030" stroke-width="2.500"/><path class="ah" d="M10 7l2 3-6 4H1l4-4z"/></svg></button>
            </div>
        </div>

        <div class="stack snaps">
            <div class="vbar">
                <button aria-label="临时追踪点"><svg viewBox="0 0 18 18"><path d="M5 9h8" stroke="#555"/><path class="pt" d="M1 7h4v4H1z"/><circle cx="14" cy="9" r="2.500" fill="#fff" stroke="#1c74c8"/></svg></button>
                <button aria-label="捕捉自"><svg viewBox="0 0 18 18"><path d="M3 5h9"/><path d="M3 5v9" stroke-dasharray="2 1"/><path class="pt" d="M1 13h4v4H1z"/><circle cx="14" cy="4" r="2.500" fill="#fff" stroke="#1c74c8"/></svg></button>
                <i class="hsep"></i>
                <button aria-label="端点"><svg viewBox="0 0 18 18"><path d="M4 14L14 4"/><circle cx="4" cy="14" r="2.500" fill="#fff" stroke="#1c74c8"/><circle cx="14.500" cy="3.500" r="2.500" fill="#fff" stroke="#1c74c8"/></svg></button>
                <button aria-label="中点"><svg viewBox="0 0 18 18"><path d="M2 16L16 2"/><circle cx="9" cy="9" r="2.500" fill="#fff" stroke="#1c74c8"/></svg></button>
                <button aria-label="交点"><svg viewBox="0 0 18 18"><path d="M2 2l14 14M2 16L16 2"/><circle cx="9" cy="9" r="2.500" fill="#fff" stroke="#1c74c8"/></svg></button>
                <button aria-label="外观交点"><svg viewBox="0 0 18 18"><path d="M2 16L16 2"/><path d="M2 2l14 14" stroke-dasharray="3 2"/><circle cx="9" cy="9" r="2.500" fill="#fff" stroke="#1c74c8"/></svg></button>
                <button aria-label="延长线"><svg viewBox="0 0 18 18"><path d="M1 9h8"/><path d="M10 9h7" stroke-dasharray="2 1"/></svg></button>
                <i class="hsep"></i>
                <button aria-label="圆心"><svg viewBox="0 0 18 18"><circle cx="9" cy="9" r="7.500" fill="#cfe2f4" stroke="#333"/><circle cx="9" cy="9" r="2" fill="#fff" stroke="#1c74c8"/></svg></button>
                <button aria-label="象限点"><svg viewBox="0 0 18 18"><circle cx="9" cy="9" r="6" fill="#cfe2f4" stroke="#333"/><g fill="#fff" stroke="#1c74c8"><circle cx="9" cy="3" r="2"/><circle cx="9" cy="15" r="2"/><circle cx="3" cy="9" r="2"/><circle cx="15" cy="9" r="2"/></g></svg></button>
                <button aria-label="切点"><svg viewBox="0 0 18 18"><circle cx="10" cy="10" r="6" fill="#cfe2f4" stroke="#333"/><path d="M1 6l10-4" stroke="#444"/><circle cx="5" cy="5" r="2" fill="#fff" stroke="#1c74c8"/></svg></button>
                <i class="hsep"></i>
                <button aria-label="垂足"><svg viewBox="0 0 18 18"><path d="M9 3v11M2 14h14"/><circle cx="9" cy="14" r="2" fill="#fff" stroke="#1c74c8"/></svg></button>
                <button aria-label="平行"><svg viewBox="0 0 18 18"><path d="M2 14L13 3M7 16L17 5" stroke-width="1.500"/></svg></button>
                <button aria-label="插入点"><svg viewBox="0 0 18 18"><path d="M5 3h9v7H5z" fill="#f5e67a" stroke="#1c4a7c"/><circle cx="12" cy="11" r="4" fill="#f5e67a" stroke="#1c4a7c"/><circle cx="4" cy="10" r="2" fill="#fff" stroke="#1c74c8"/></svg></button>
                <button aria-label="节点"><svg viewBox="0 0 18 18"><circle cx="9.500" cy="10" r="2" fill="#fff" stroke="#1c74c8"/></svg></button>
                <i class="hsep"></i>
                <button aria-label="最近点"><svg viewBox="0 0 18 18"><path d="M2 16L14 2M8 9l6 3"/><circle cx="10" cy="7" r="2" fill="#fff" stroke="#1c74c8"/><circle cx="14" cy="13" r="2" fill="#fff" stroke="#555"/></svg></button>
                <button aria-label="无捕捉"><svg viewBox="0 0 18 18"><path d="M4 15V7c0-6 9-6 9 0v6" stroke="#999" stroke-width="3"/><path d="M1 14L14 1" stroke="#e2301e" stroke-width="2.500"/><path d="M13 13h4v4h-4z" fill="#fff" stroke-width="1"/></svg></button>
                <i class="hsep"></i>
                <button aria-label="捕捉设置"><svg viewBox="0 0 18 18"><path d="M3 15V7c0-6 8-6 8 0v7" stroke="#c4283e" stroke-width="3"/><path d="M2 14h3M10 13h3" stroke="#ccc" stroke-width="3"/><path d="M13 13h4v4h-4z" fill="#fff" stroke="#1c74c8"/></svg></button>
            </div>
            <div class="vbar clip">
                <button aria-label="前置"><svg viewBox="0 0 18 18"><path d="M1.500 1.500h9v8h-9zM8.500 9.500h8v7h-8z" fill="#dce9f5" stroke="#8ab"/><path d="M4.500 4.500h10v9h-10z" fill="#4f80b4" stroke="#2b5f96"/></svg></button>
                <button aria-label="后置"><svg viewBox="0 0 18 18"><path d="M4.500 4.500h10v9h-10z" fill="#4f80b4" stroke="#2b5f96"/><path d="M1.500 1.500h8v6h-8zM9.500 10.500h7v6h-7z" fill="#dce9f5" stroke="#8ab"/></svg></button>
                <button aria-label="置于对象之上"><svg viewBox="0 0 18 18"><path d="M6.500 7.500h10v9h-10z" fill="#dce9f5" stroke="#8ab"/><path d="M1.500 2.500h12v10h-12z" fill="#4f80b4" stroke="#2b5f96"/></svg></button>
                <button aria-label="置于对象之下"><svg viewBox="0 0 18 18"><path d="M1.500 1.500h12v10h-12z" fill="#4f80b4" stroke="#2b5f96"/><path d="M6.500 6.500h10v9h-10z" fill="#b8d0e8" stroke="#7a9abc"/></svg></button>
            </div>
        </div>
    </main>

    <section class="command">
        <i class="handle"></i><i class="handle"></i>
        <div class="cmdbox">
            <div class="history">命令: <span class="en">_copybase</span> 指定基点:</div>
            <div class="prompt">
                <input type="text" aria-label="命令行" value="选择对象: 指定对角点:">
                <div class="track cmdtrack">
                    <b class="tri left"></b>
                    <button class="thumb side" aria-label="命令行滚动"></button>
                    <b class="tri right"></b>
                </div>
            </div>
        </div>
    </section>

    <footer class="status">
        <output class="coords">2700.1112, 524.4185, 0.0000</output>
        <button>捕捉</button>
        <button>栅格</button>
        <button>正交</button>
        <button class="on">极轴</button>
        <button class="on">对象捕捉</button>
        <button class="on">对象追踪</button>
        <button class="on mono">DUCS</button>
        <button class="mono">DYN</button>
        <button class="on">线宽</button>
        <span class="scale">注释比例<span class="mono">: 1:1</span></span>
        <span class="tray">
            <svg viewBox="0 0 18 18"><path d="M5 9V5c0-5 8-5 8 0v4" stroke="#3a4a5a" stroke-width="2"/><path d="M2 8h14v6c0 4-14 4-14 0z" fill="#4a5a6a" stroke="#2a3642"/><path d="M3 10.500h12M3 13.500h12" stroke="#c8d4de"/></svg>
            <svg viewBox="0 0 18 18"><path d="M2 2h9l4 4v10H2z" fill="#3a74ac"/><path d="M4 5h5M6.500 3v9M11 2v4h4" stroke="#dce9f5" stroke-width="1.500"/><circle cx="12" cy="13" r="5" fill="#43a82e"/><path d="M9.500 13l2 2 3-4" stroke="#fff" stroke-width="2"/></svg>
        </span>
        <b class="tri down dark"></b>
        <button class="clean" aria-label="全屏显示"><svg viewBox="0 0 18 18"><path d="M1.500 1.500h15v15h-15z" fill="#fff" stroke="#1c4a7c"/><path d="M4.500 4.500h9v9h-9z" fill="#b8d4ee" stroke="#3c79b4"/></svg></button>
        <svg class="grippy" viewBox="0 0 12 12"><path d="M10 1v2M10 5v2M6 5v2M10 9v2M6 9v2M2 9v2" stroke="#b8b0b4" stroke-width="2"/></svg>
    </footer>
</div>
</body>
</html>
```
FILE: styles.css
```css
* {
    box-sizing: border-box;
}
body {
    margin: 0;
    height: 100vh;
    overflow: hidden;
    background: #0d1a26;
    font-family: "Noto Sans CJK SC", sans-serif;
    font-size: 15px;
    color: #000;
}
button {
    padding: 0;
    border: 0;
    background: none;
    font: inherit;
    color: inherit;
}
svg {
    fill: none;
    stroke-width: 1.5px;
}
.defs {
    position: absolute;
    width: 0;
    height: 0;
}
.window {
    display: flex;
    flex-direction: column;
    height: 100vh;
    padding: 0 7px 7px 7px;
    border: 2px solid #15181c;
    border-right-color: #3cb8d8;
    border-bottom-color: #1a90b0;
    border-radius: 8px 8px 0 0;
    background: #b9d1ea;
}

/* title and menu */
.titlebar {
    display: flex;
    align-items: center;
    flex: none;
    height: 32px;
    margin: 0 -7px;
    padding: 2px 8px 0;
    gap: 2px;
    border-radius: 6px 6px 0 0;
    background: linear-gradient(#a3bbd6, #97b4d3 45%, #a6c2df 50%, #bed4ea);
}
.appicon {
    width: 22px;
    height: 22px;
}
.title {
    flex: 1;
    margin: 0 0 0 3px;
    font: 16px "Open Sans", "Noto Sans CJK SC", sans-serif;
    white-space: nowrap;
}
.winbtn {
    display: flex;
    align-items: center;
    justify-content: center;
    width: 36px;
    height: 20px;
    margin-top: 4px;
    border: 1px solid #5a6d84;
    border-radius: 3px;
    box-shadow: inset 0 0 0 1px #dce8f4;
    background: linear-gradient(#c3d3e5 45%, #9cb3cd 50%, #b5cce4);
}
.winbtn svg {
    width: 16px;
    height: 14px;
    stroke-width: 1px;
}
.winbtn.close {
    border-color: #5a2020;
    box-shadow: inset 0 0 0 1px #e8a898;
    background: linear-gradient(#dc9c90 40%, #b8301c 50%, #d0583c);
}
.menubar {
    display: flex;
    align-items: center;
    flex: none;
    height: 24px;
    background: linear-gradient(#fff, #eef1f8 40%, #d8ddee 60%, #e4e8f5);
}
.menubar a {
    margin-right: 14px;
    color: #000;
    text-decoration: none;
    white-space: nowrap;
}
.docicon {
    width: 20px;
    height: 22px;
    margin: 0 8px;
}
.dwg {
    font: bold 7px "Liberation Sans", sans-serif;
    fill: #222;
}
.docbtns {
    display: flex;
    gap: 2px;
    margin-left: auto;
}
.docbtns button {
    width: 23px;
    height: 22px;
    border: 1px solid #a9bdd1;
    background: #dfeaf5;
}
.docbtns svg {
    width: 12px;
    height: 12px;
    stroke-width: 1px;
}

/* horizontal toolbars */
.toolrow {
    display: flex;
    flex: none;
    height: 29px;
    overflow: hidden;
    border-bottom: 1px solid #a5a5a5;
    background: #f0f0f0;
    box-shadow: inset 0 1px #fff;
}
.toolrow + .toolrow {
    height: 27px;
}
.toolrow.last {
    height: 28px;
}
.bar {
    display: flex;
    align-items: center;
    flex: none;
    padding: 3px 3px 0 13px;
    border-right: 1px solid #a0a0a0;
}
.bar.open {
    flex: 1;
    padding-right: 0;
    border-right: 0;
}
.bar button {
    display: flex;
    align-items: center;
    justify-content: center;
    flex: none;
    width: 23px;
    height: 22px;
}
.bar button svg,
.vbar button svg {
    width: 18px;
    height: 18px;
}
.bar.standard button svg {
    stroke-width: 1px;
}
.bar button.mini {
    width: 13px;
}
.sep {
    flex: none;
    width: 2px;
    height: 18px;
    margin: 0 2px;
    border-left: 1px solid #9a8f96;
}
.bar.layerbar {
    padding-left: 14px;
}
.bar.leaders {
    padding-left: 15px;
}
.props {
    gap: 6px;
}
.combo {
    display: flex;
    align-items: center;
    flex: none;
    height: 22px;
    border: 1px solid #a8a8a8;
    border-radius: 2px;
    background: #f2f2f2;
}
.combo::after {
    content: "";
    width: 0;
    margin: 0 6px;
    border: 4px solid transparent;
    border-top: 5px solid #909090;
    border-bottom: 0;
}
.combo select {
    flex: 1;
    min-width: 0;
    height: 20px;
    padding: 0 0 0 3px;
    border: 0;
    appearance: none;
    background: none;
    font: 13px "Liberation Mono", "Noto Sans CJK SC", monospace;
    color: #808080;
}
.combo .indent {
    padding-left: 8px;
}
.w-space { width: 175px; }
.w-space select { font-size: 14px; }
.w-layer { width: 299px; }
.w-color { width: 150px; }
.w-line { width: 160px; }
.w-weight { width: 125px; }
.w-plot { width: 120px; }
.w-plot select { font-size: 15px; }
.w-text { width: 120px; margin-left: 1px; }
.w-text .indent,
.w-rest .indent { padding-left: 17px; }
.w-rest { flex: 1 0 120px; }
.layericons {
    width: 84px;
    height: 18px;
    stroke-width: 1px;
}
.swatch {
    width: 12px;
    height: 12px;
    margin-left: 4px;
}
.line {
    flex: none;
    width: 60px;
    margin: 0 0 0 4px;
    border: 0;
    border-top: 1px solid #000;
}
.line.short {
    width: 35px;
}
.tri {
    flex: none;
    width: 0;
    height: 0;
    border: 4px solid transparent;
    border-top: 4px solid #a8a8a8;
    border-bottom: 0;
}
.tri.up {
    border: 4px solid transparent;
    border-bottom: 5px solid #444;
    border-top: 0;
}
.tri.down {
    border-top: 5px solid #555;
}
.tri.left {
    border: 4px solid transparent;
    border-right: 5px solid #333;
    border-left: 0;
}
.tri.right {
    border: 4px solid transparent;
    border-left: 5px solid #444;
    border-right: 0;
}

/* workspace */
.workspace {
    display: flex;
    flex: 1;
    min-height: 0;
    padding-top: 1px;
    border-bottom: 2px solid #8a8a8a;
    background: #f0f0f0;
}
.stack {
    display: flex;
    flex-direction: column;
    flex: none;
    width: 26px;
    min-height: 0;
    padding-bottom: 5px;
}
.vbar {
    display: flex;
    flex-direction: column;
    align-items: center;
    flex: none;
    padding: 11px 0 5px;
    border-right: 2px solid #b0b0b0;
    border-bottom: 1px solid #a0a0a0;
}
.vbar.clip {
    flex: 1;
    min-height: 0;
    overflow: hidden;
    padding-bottom: 0;
    border-bottom: 0;
}
.modify .vbar:last-child {
    border-bottom: 0;
}
.dims {
    width: 25px;
    margin-left: 2px;
}
.snaps {
    width: 27px;
}
.snaps .vbar {
    border-right-color: transparent;
}
.vbar button {
    display: flex;
    align-items: center;
    justify-content: center;
    flex: none;
    width: 22px;
    height: 22px;
    stroke: #111;
}
.vbar button svg {
    stroke-width: 1.3px;
}
.pt {
    fill: #1c74c8;
    stroke: none;
}
.ah {
    fill: #111;
    stroke: none;
}
.vbar .glyph {
    font: 18px/20px "Noto Sans", sans-serif;
}
.vbar .glyph .caret {
    width: 6px;
    overflow: visible;
}
.hsep {
    flex: none;
    width: 19px;
    height: 6px;
    background: linear-gradient(#9a9a9a, #9a9a9a) 0 2px / 100% 1px no-repeat;
}

/* drawing view */
.view {
    display: grid;
    grid-template-columns: minmax(0, 1fr) 22px;
    grid-template-rows: minmax(0, 1fr) 19px;
    flex: 1;
    min-width: 0;
    margin-bottom: 6px;
    border-top: 2px solid #6a6a6a;
    border-left: 1px solid #6a6a6a;
}
.canvas {
    width: 100%;
    height: 100%;
    min-height: 0;
    shape-rendering: crispEdges;
    stroke-width: 1px;
}
.hatch {
    stroke: #00f400;
}
.outline {
    stroke: #fff;
    stroke-width: 2px;
}
.frame,
.ucs {
    stroke: #fff;
}
.ucs text {
    font: 300 16px "Open Sans", sans-serif;
    fill: #fff;
    stroke: none;
}
.vscroll {
    display: flex;
    flex-direction: column;
    align-items: center;
    padding: 8px 0 7px;
    border-right: 1px solid #c8c8c8;
    background: #ececec;
}
.thumb {
    flex: none;
    width: 18px;
    height: 18px;
    border: 1px solid #8a8a8a;
    border-radius: 2px;
    background: repeating-linear-gradient(#555 0 1px, transparent 1px 4px) center / 9px 9px no-repeat, linear-gradient(90deg, #f6f6f6, #cfcfcf);
}
.vscroll .thumb {
    margin: 114px 0 auto;
}
.thumb.side {
    background: repeating-linear-gradient(90deg, #555 0 1px, transparent 1px 4px) center / 9px 9px no-repeat, linear-gradient(#f6f6f6, #cfcfcf);
}
.tabs {
    display: flex;
    min-width: 0;
    background: #f0f0f0;
}
.nav {
    flex: none;
    width: 18px;
    border: 1px solid #c0c0c0;
    border-width: 0 1px 1px 0;
}
.nav svg {
    width: 12px;
    height: 12px;
}
.tab {
    flex: none;
    height: 19px;
    margin-right: -7px;
    padding: 0 1px;
    background: #777;
    font: 13px/18px "Liberation Mono", monospace;
    clip-path: polygon(0 0, 100% 0, calc(100% - 9px) 100%, 9px 100%);
}
.tab span {
    display: block;
    height: 18px;
    padding: 0 13px;
    background: #f2f2f2;
    clip-path: polygon(0 0, 100% 0, calc(100% - 9px) 100%, 9px 100%);
}
.tab.active {
    margin-left: 2px;
    font: 15px/18px "Noto Sans CJK SC", sans-serif;
}
.tab.active,
.tab.active span {
    background: #000;
    color: #fff;
}
.hscroll {
    display: flex;
    flex: 1;
    justify-content: flex-end;
    align-items: center;
}
.grip {
    width: 6px;
    height: 17px;
    border: 1px solid #999;
    border-radius: 3px;
    background: #fff;
}
.track {
    display: flex;
    align-items: center;
    gap: 10px;
    padding: 0 8px;
    background: #e9e9e9;
}
.track .tri.right {
    margin-left: auto;
}
.hscroll .track {
    flex: 0 1 239px;
    height: 19px;
}
.corner {
    border: 1px solid #c8c8c8;
    background: #f0f0f0;
}

/* command line */
.command {
    display: flex;
    flex: none;
    height: 63px;
    padding: 9px 8px 0 6px;
    border-bottom: 1px solid #9a9a9a;
    background: #f0f0f0;
}
.handle {
    width: 3px;
    height: 46px;
    margin-right: 1px;
    border: 1px solid #c0c0c0;
    border-left-color: #fff;
}
.cmdbox {
    flex: 1;
    min-width: 0;
    margin-left: 3px;
    border-top: 2px solid #6a6a6a;
    border-left: 1px solid #6a6a6a;
    background: #f9f9f9;
}
.history,
.prompt input {
    font: 19px/22px "Liberation Mono", "Noto Sans CJK SC", monospace;
    padding: 0 0 0 1px;
    white-space: pre;
}
.history {
    height: 25px;
    overflow: hidden;
    border-bottom: 1px solid #9a9a9a;
}
.history .en {
    font-size: 17px;
}
.prompt {
    display: flex;
    padding-right: 22px;
}
.prompt input {
    flex: 1;
    min-width: 0;
    height: 25px;
    border: 0;
    background: none;
}
.cmdtrack {
    width: 82px;
    height: 22px;
}

/* status bar */
.status {
    display: flex;
    align-items: center;
    flex: none;
    height: 21px;
    gap: 4px;
    padding: 0 2px 0 5px;
    border-top: 1px solid #888;
    background: #f0e6e8;
    overflow: hidden;
    white-space: nowrap;
}
.coords {
    flex: none;
    width: 232px;
    height: 18px;
    padding-left: 2px;
    border: 1px solid #999;
    font: 13px/18px "Liberation Mono", monospace;
}
.status button {
    flex: none;
    height: 18px;
    padding: 0 1px;
    border: 1px solid #fff;
    border-right-color: #999;
    border-bottom-color: #999;
    font: 15px/15px "Noto Sans CJK SC", sans-serif;
}
.status button.on {
    border-color: #222 #fff #fff #222;
}
.status .mono {
    font: 13px/15px "Liberation Mono", monospace;
}
.scale {
    margin-left: 11px;
    line-height: 18px;
}
.tray {
    display: flex;
    gap: 3px;
    padding: 0 3px;
    margin-left: auto;
    background: #f6f6f6;
}
.tray svg {
    width: 17px;
    height: 17px;
}
.tri.dark {
    margin: 4px 5px 0 3px;
    border-top-color: #000;
}
.status .clean {
    width: 18px;
    padding: 0;
    border: 0;
}
.clean svg {
    width: 17px;
    height: 17px;
}
.grippy {
    width: 12px;
    height: 12px;
    margin-left: 3px;
}
```
